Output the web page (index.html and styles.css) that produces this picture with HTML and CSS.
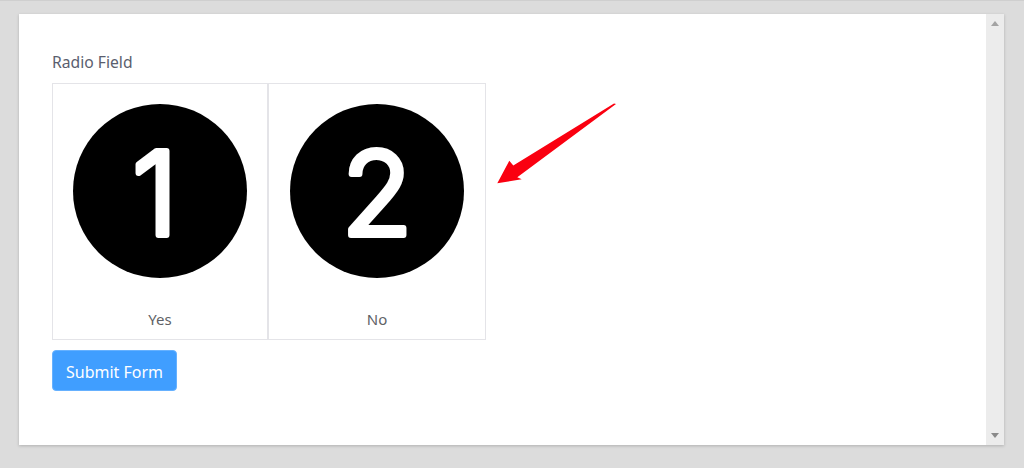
FILE: index.html
```html
<!DOCTYPE html>
<html lang="en">
<head>
  <meta charset="UTF-8">
  <title>Radio Field</title>
  <link rel="stylesheet" href="styles.css">
</head>
<body>
  <div class="panel">
    <form class="content">
      <div class="field-label">Radio Field</div>
      <div class="options">
        <label class="option">
          <svg class="badge" viewBox="0 0 174 174">
            <circle cx="87" cy="87" r="87"></circle>
            <text x="82" y="131">1</text>
          </svg>
          <span class="option-name">Yes</span>
        </label>
        <label class="option option-wide">
          <svg class="badge" viewBox="0 0 174 174">
            <circle cx="87" cy="87" r="87"></circle>
            <text x="87" y="131">2</text>
          </svg>
          <span class="option-name">No</span>
        </label>
      </div>
      <button class="submit" type="button">Submit Form</button>
    </form>
    <div class="scrollbar">
      <span class="arrow-up"></span>
      <span class="arrow-down"></span>
    </div>
    <svg class="pointer" viewBox="0 0 132 100" width="132" height="100">
      <polygon points="131,14 129,13.5 28.3,75.5 24.3,70.7 12.3,93.3 36.7,89.3 32.3,87.3"></polygon>
    </svg>
  </div>
</body>
</html>
```

FILE: styles.css
```css
html, body {
  margin: 0;
  height: 100%;
}
body {
  box-sizing: border-box;
  height: 468px;
  padding: 14px 20px 22px 19px;
  background: #dcdcdc;
  border-top: 1px solid #cfcfcf;
  font-family: "Noto Sans", "Open Sans", sans-serif;
  overflow: hidden;
}
.panel {
  position: relative;
  display: flex;
  height: 100%;
  margin-top: -1px;
  background: #fff;
  box-shadow: 0 1px 3px rgba(0, 0, 0, .2);
}
.content {
  flex: 1;
  padding: 37px 33px 0;
}
.field-label {
  height: 32px;
  font-size: 15.7px;
  line-height: 22px;
  color: #5a5e6e;
}
.options {
  display: flex;
}
.option {
  display: flex;
  flex-direction: column;
  align-items: center;
  box-sizing: border-box;
  width: 216px;
  height: 257px;
  padding-top: 20px;
  border: 1px solid #e4e4e8;
}
.option-wide {
  width: 218px;
}
.badge {
  width: 174px;
  height: 174px;
}
.badge text {
  font-family: Inter, sans-serif;
  font-size: 115px;
  font-weight: 300;
  text-anchor: middle;
  fill: #fff;
  stroke: #fff;
  stroke-width: 6px;
  stroke-linejoin: round;
}
.option-name {
  margin-top: 31px;
  font-size: 15px;
  line-height: 20px;
  color: #606266;
}
.submit {
  display: block;
  box-sizing: border-box;
  width: 125px;
  height: 41px;
  margin-top: 10px;
  padding: 2px 0 0;
  background: #409eff;
  border: 1px solid #66b1ff;
  border-radius: 4px;
  font-family: inherit;
  font-size: 16px;
  color: #fff;
}
.scrollbar {
  display: flex;
  flex-direction: column;
  justify-content: space-between;
  align-items: center;
  width: 18px;
  padding: 7px 0;
  box-sizing: border-box;
  background: #ececec;
}
.arrow-up {
  border: 4px solid transparent;
  border-top: 0;
  border-bottom: 5px solid #a3a3a3;
}
.arrow-down {
  border: 4px solid transparent;
  border-bottom: 0;
  border-top: 5px solid #8a8a8a;
}
/* annotation drawn over the form */
.pointer {
  position: absolute;
  left: 466px;
  top: 76px;
}
.pointer polygon {
  fill: #fa0010;
}
```
